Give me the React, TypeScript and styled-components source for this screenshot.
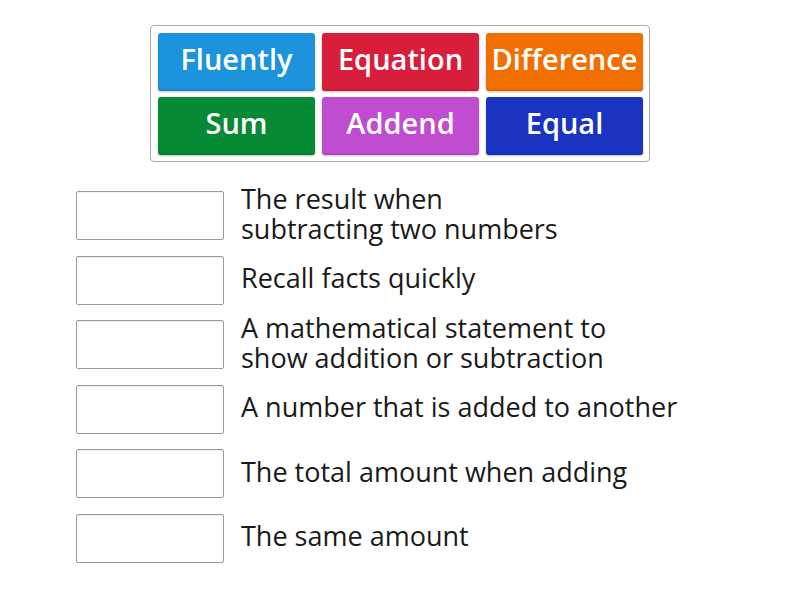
import React from "react";
import styled, { createGlobalStyle } from "styled-components";

const GlobalStyle = createGlobalStyle`
  html, body {
    margin: 0;
    padding: 0;
    background: #ffffff;
  }
  body {
    font-family: "Open Sans", "Liberation Sans", sans-serif;
  }
`;

const Page = styled.div`
  width: 800px;
  height: 600px;
  display: flex;
  flex-direction: column;
  align-items: flex-start;
  padding-top: 25px;
  box-sizing: border-box;
`;

const Tray = styled.div`
  margin-left: 150px;
  width: 500px;
  box-sizing: border-box;
  border: 1px solid #a9a9a9;
  border-radius: 4px;
  padding: 7px 7px 6px 7px;
  display: grid;
  grid-template-columns: repeat(3, 157px);
  grid-auto-rows: 58px;
  column-gap: 7px;
  row-gap: 6px;
`;

const Tile = styled.div<{ $bg: string }>`
  background: ${(p) => p.$bg};
  border-radius: 3px;
  box-shadow: 0 1px 2px rgba(0, 0, 0, 0.25), inset 0 -2px 0 rgba(0, 0, 0, 0.08);
  display: flex;
  align-items: center;
  justify-content: center;
  padding-bottom: 8px;
  box-sizing: border-box;
  color: #ffffff;
  font-weight: 600;
  font-size: 29px;
  white-space: nowrap;
`;

const List = styled.div`
  margin-top: 29px;
  margin-left: 76px;
  display: flex;
  flex-direction: column;
  gap: 15.5px;
`;

const Row = styled.div`
  display: flex;
  align-items: center;
  gap: 17px;
  height: 49px;
`;

const Slot = styled.div`
  flex: 0 0 auto;
  width: 148px;
  height: 49px;
  box-sizing: border-box;
  border: 1px solid #9a9a9a;
  border-radius: 2px;
  background: #ffffff;
  box-shadow: inset 0 1px 0 rgba(0, 0, 0, 0.06);
`;

const Clue = styled.div`
  font-size: 27px;
  line-height: 30px;
  color: #1a1a1a;
  margin-top: -4px;
  white-space: nowrap;
`;

const tiles = [
  { label: "Fluently", bg: "#1d93dd" },
  { label: "Equation", bg: "#d81e3a" },
  { label: "Difference", bg: "#f06f00" },
  { label: "Sum", bg: "#078a34" },
  { label: "Addend", bg: "#c04ccf" },
  { label: "Equal", bg: "#1a33c0" },
];

const clues = [
  ["The result when", "subtracting two numbers"],
  ["Recall facts quickly"],
  ["A mathematical statement to", "show addition or subtraction"],
  ["A number that is added to another"],
  ["The total amount when adding"],
  ["The same amount"],
];

export default function App() {
  return (
    <>
      <GlobalStyle />
      <Page>
        <Tray>
          {tiles.map((t) => (
            <Tile key={t.label} $bg={t.bg}>
              {t.label}
            </Tile>
          ))}
        </Tray>
        <List>
          {clues.map((lines, i) => (
            <Row key={i}>
              <Slot />
              <Clue>
                {lines.map((l, j) => (
                  <React.Fragment key={j}>
                    {j > 0 && <br />}
                    {l}
                  </React.Fragment>
                ))}
              </Clue>
            </Row>
          ))}
        </List>
      </Page>
    </>
  );
}
